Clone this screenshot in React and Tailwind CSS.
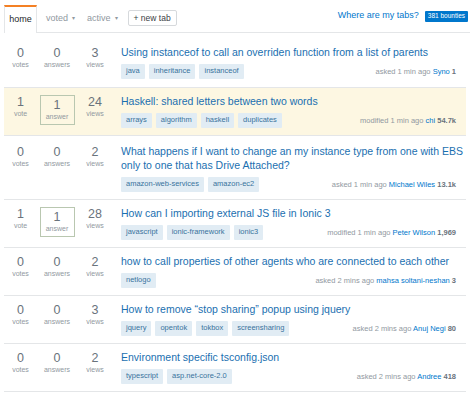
import React from 'react';

const questions = [
  {
    votes: 0, answers: 0, views: 3,
    title: 'Using instanceof to call an overriden function from a list of parents',
    tags: ['java', 'inheritance', 'instanceof'],
    action: 'asked 1 min ago', user: 'Syno', rep: '1',
  },
  {
    votes: 1, answers: 1, views: 24, highlight: true, answered: true,
    title: 'Haskell: shared letters between two words',
    tags: ['arrays', 'algorithm', 'haskell', 'duplicates'],
    action: 'modified 1 min ago', user: 'chi', rep: '54.7k',
  },
  {
    votes: 0, answers: 0, views: 2, tall: true,
    title: 'What happens if I want to change an my instance type from one with EBS only to one that has Drive Attached?',
    tags: ['amazon-web-services', 'amazon-ec2'],
    action: 'asked 1 min ago', user: 'Michael Wiles', rep: '13.1k',
  },
  {
    votes: 1, answers: 1, views: 28, answered: true,
    title: 'How can I importing external JS file in Ionic 3',
    tags: ['javascript', 'ionic-framework', 'ionic3'],
    action: 'modified 1 min ago', user: 'Peter Wilson', rep: '1,969',
  },
  {
    votes: 0, answers: 0, views: 2,
    title: 'how to call properties of other agents who are connected to each other',
    tags: ['netlogo'],
    action: 'asked 2 mins ago', user: 'mahsa soltani-neshan', rep: '3',
  },
  {
    votes: 0, answers: 0, views: 3,
    title: 'How to remove \u201cstop sharing\u201d popup using jquery',
    tags: ['jquery', 'opentok', 'tokbox', 'screensharing'],
    action: 'asked 2 mins ago', user: 'Anuj Negi', rep: '80',
  },
  {
    votes: 0, answers: 0, views: 2,
    title: 'Environment specific tsconfig.json',
    tags: ['typescript', 'asp.net-core-2.0'],
    action: 'asked 2 mins ago', user: 'Andree', rep: '418',
  },
];

const Stat = ({ value, label, boxed, width }) => (
  <div className={`${width} flex justify-center`}>
    <div
      className={`flex flex-col items-center ${
        boxed ? 'border border-[#b9c7b0] w-[35px] h-[30px] justify-center' : 'pt-[1px]'
      }`}
    >
      <span className="text-[12.5px] leading-[13px] text-[#6a737c]">{value}</span>
      <span className="text-[7px] leading-[10px] text-[#9199a1]">{label}</span>
    </div>
  </div>
);

const rowPad = (q, first) => {
  if (first) return 'pt-[12px] pb-[8px]';
  if (q.tall) return 'pt-[8px] pb-[7px]';
  return 'pt-[6px] pb-[7px]';
};

const Row = ({ q, first }) => (
  <div
    className={`flex border-b border-[#e4e6e8] ${q.highlight ? 'bg-[#fdf7e2]' : ''} ${rowPad(q, first)}`}
  >
    <div className="flex w-[109px] shrink-0 pt-[1px]">
      <Stat width="w-[33px]" value={q.votes} label={q.votes === 1 ? 'vote' : 'votes'} />
      <Stat width="w-[40px]" value={q.answers} label={q.answers === 1 ? 'answer' : 'answers'} boxed={q.answered} />
      <Stat width="w-[36px]" value={q.views} label="views" />
    </div>
    <div className="flex-1 pl-[8px] pr-[2px]">
      <a className="block text-[10.5px] leading-[14px] text-[#1a6fb0]">{q.title}</a>
      <div className="flex items-center justify-between mt-[5px]">
        <div className="flex gap-[4px]">
          {q.tags.map((t) => (
            <span
              key={t}
              className="bg-[#e1ecf4] text-[#39739d] text-[7.5px] leading-[14px] h-[15px] px-[5px] rounded-[1px]"
            >
              {t}
            </span>
          ))}
        </div>
        <div className="text-[7.5px] whitespace-nowrap mr-[8px]">
          <span className="text-[#9199a1]">{q.action} </span>
          <span className="text-[#0077cc]">{q.user} </span>
          <span className="text-[#6a737c] font-bold">{q.rep}</span>
        </div>
      </div>
    </div>
  </div>
);

export default function App() {
  return (
    <div className="w-[474px] h-[395px] bg-white overflow-hidden font-['Liberation_Sans',Arial,sans-serif]">
      <div className="flex items-end justify-between border-b border-[#e4e6e8] mx-[4px] pt-[5px] h-[33px]">
        <div className="flex items-end h-full">
          <div className="h-[28px] w-[33px] border-t-2 border-t-[#f48024] border-x border-x-[#e4e6e8] bg-white -mb-px flex items-center justify-center text-[9px] text-[#242729]">
            home
          </div>
          <div className="h-[27px] flex items-center pl-[9px] pr-[12px] text-[9px] text-[#9199a1]">
            voted <span className="ml-[4px] text-[6px]">&#9662;</span>
          </div>
          <div className="h-[27px] flex items-center pr-[10px] text-[9px] text-[#9199a1]">
            active <span className="ml-[4px] text-[6px]">&#9662;</span>
          </div>
          <div className="mb-[6px] h-[16px] px-[5px] border border-[#d6d9dc] rounded-[2px] flex items-center text-[8.5px] text-[#3b4045]">
            + new tab
          </div>
        </div>
        <div className="flex items-center h-[27px] pb-[5px] pr-[2px]">
          <span className="text-[9px] text-[#0077cc] mr-[6px]">Where are my tabs?</span>
          <span className="bg-[#0077cc] text-white text-[6.5px] h-[11px] px-[3px] flex items-center rounded-[1px]">
            381 bounties
          </span>
        </div>
      </div>
      <div className="ml-[4px] mr-[8px]">
        {questions.map((q, i) => (
          <Row key={i} q={q} first={i === 0} />
        ))}
      </div>
    </div>
  );
}
